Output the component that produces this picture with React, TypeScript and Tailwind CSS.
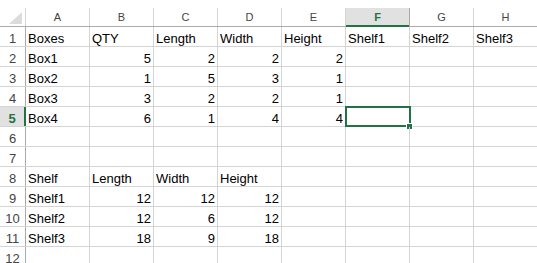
import React from "react";

const cols = ["A", "B", "C", "D", "E", "F", "G", "H"];

type Cell = string | number | null;

const rows: Cell[][] = [
  ["Boxes", "QTY", "Length", "Width", "Height", "Shelf1", "Shelf2", "Shelf3"],
  ["Box1", 5, 2, 2, 2, null, null, null],
  ["Box2", 1, 5, 3, 1, null, null, null],
  ["Box3", 3, 2, 2, 1, null, null, null],
  ["Box4", 6, 1, 4, 4, null, null, null],
  [null, null, null, null, null, null, null, null],
  [null, null, null, null, null, null, null, null],
  ["Shelf", "Length", "Width", "Height", null, null, null, null],
  ["Shelf1", 12, 12, 12, null, null, null, null],
  ["Shelf2", 12, 6, 12, null, null, null, null],
  ["Shelf3", 18, 9, 18, null, null, null, null],
  [null, null, null, null, null, null, null, null],
];

export default function App() {
  const font = { fontFamily: '"Liberation Sans", Arial, sans-serif' };
  return (
    <div
      className="w-[537px] h-[263px] overflow-hidden bg-white pt-[8px]"
      style={font}
    >
      {/* Column header */}
      <div className="flex h-[19px] border-b border-[#ababab] w-[600px]">
        <div className="w-[26px] shrink-0 border-r border-[#d4d4d4] relative">
          <svg
            className="absolute left-[9px] top-[4px]"
            width="13"
            height="12"
            viewBox="0 0 13 12"
          >
            <polygon points="13,0 13,12 0,12" fill="#dcdcdc" />
          </svg>
        </div>
        {cols.map((c) => {
          const sel = c === "F";
          return (
            <div
              key={c}
              className={
                sel
                  ? "w-[64px] shrink-0 border-r border-[#ababab] bg-[#e1e1e1] flex items-center justify-center text-[11px] leading-[18px] font-bold text-[#217346] relative"
                  : "w-[64px] shrink-0 border-r border-[#d4d4d4] flex items-center justify-center text-[11px] leading-[18px] text-[#444444]"
              }
            >
              {c}
              {sel && (
                <div className="absolute left-0 right-0 bottom-[-1px] h-[2px] bg-[#217346]" />
              )}
            </div>
          );
        })}
      </div>
      {rows.map((r, ri) => {
        const rowSel = ri === 4;
        return (
          <div key={ri} className="flex h-[20px] border-b border-[#d4d4d4] w-[600px]">
            <div
              className={
                rowSel
                  ? "w-[26px] shrink-0 border-r-2 border-[#217346] bg-[#e1e1e1] flex items-end justify-center text-[13px] leading-[15px] font-bold text-[#217346]"
                  : "w-[26px] shrink-0 border-r border-[#ababab] flex items-end justify-center text-[13px] leading-[15px] text-[#444444]"
              }
            >
              {ri + 1}
            </div>
            {r.map((v, ci) => {
              const isNum = typeof v === "number";
              const isSel = rowSel && ci === 5;
              return (
                <div
                  key={ci}
                  className={
                    "w-[64px] shrink-0 border-r border-[#d4d4d4] flex items-end text-[13px] leading-[15px] text-black whitespace-nowrap relative " +
                    (isNum ? "justify-end pr-[2px]" : "justify-start pl-[2px]")
                  }
                >
                  {v !== null ? String(v) : ""}
                  {isSel && (
                    <>
                      <div className="absolute left-[-1px] top-[-1px] w-[66px] h-[21px] border-2 border-[#217346]" />
                      <div className="absolute left-[60px] top-[16px] w-[7px] h-[7px] bg-[#217346] border border-white" />
                    </>
                  )}
                </div>
              );
            })}
          </div>
        );
      })}
    </div>
  );
}
